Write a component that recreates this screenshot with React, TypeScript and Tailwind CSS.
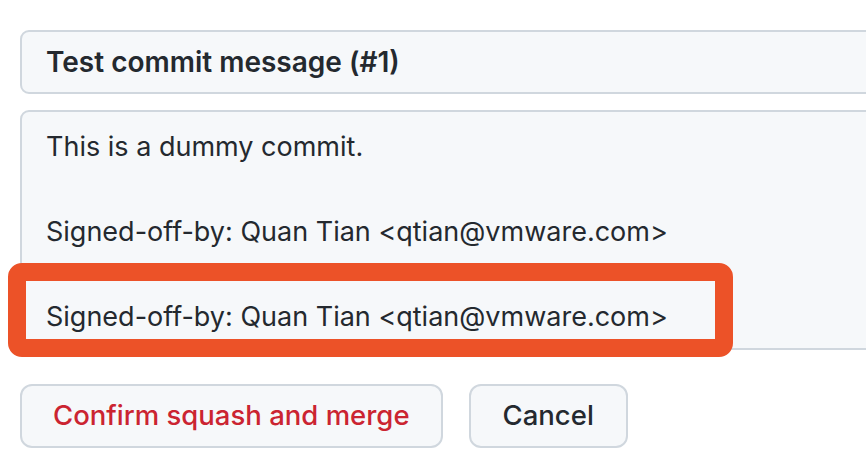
import React from "react";

export default function App() {
  return (
    <div className="relative w-[866px] h-[472px] overflow-hidden bg-white font-['Inter','Liberation_Sans',sans-serif] text-[#24292f]">
      <div className="flex flex-col pl-[20px] pt-[30px]">
        <div className="w-[900px] h-[64px] shrink-0 border-2 border-[#d0d7de] rounded-[9px] bg-[#f6f8fa] px-[24px] flex items-center text-[28px] font-semibold">
          Test commit message (#1)
        </div>
        <div className="mt-[16px] w-[900px] h-[240px] shrink-0 border-2 border-[#d0d7de] rounded-[9px] bg-[#f6f8fa] px-[24px] pt-[14px] text-[27px] leading-[42.5px] whitespace-pre">
          {"This is a dummy commit.\n\nSigned-off-by: Quan Tian <qtian@vmware.com>\n\nSigned-off-by: Quan Tian <qtian@vmware.com>"}
        </div>
        <div className="mt-[34px] flex gap-[26px]">
          <button className="h-[64px] px-[31px] border-2 border-[#d0d7de] rounded-[12px] bg-[#f6f8fa] text-[27.5px] font-medium text-[#cb2431]">
            Confirm squash and merge
          </button>
          <button className="h-[64px] px-[32px] border-2 border-[#d0d7de] rounded-[12px] bg-[#f6f8fa] text-[27.5px] font-medium text-[#24292f]">
            Cancel
          </button>
        </div>
      </div>
      <div className="absolute left-[8px] top-[263px] w-[725px] h-[94px] border-[18px] border-[#ec5228] rounded-[14px]" />
    </div>
  );
}
